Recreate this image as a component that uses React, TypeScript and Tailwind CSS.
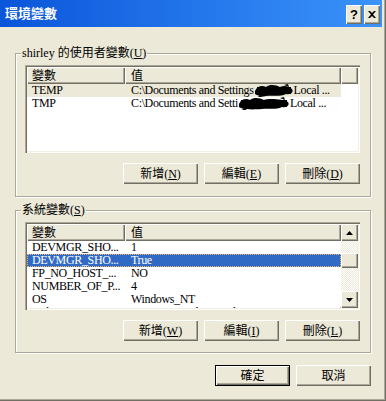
import React from "react";

const RAISED =
  "bg-[#ECE9D8] shadow-[inset_1px_1px_0_#ffffff,inset_-1px_-1px_0_#716F64,inset_-2px_-2px_0_#ACA899]";

function Blob({ w }: { w: number }) {
  return (
    <svg width={w} height={13} viewBox={`0 0 ${w} 13`} className="inline-block align-top">
      <path
        d={`M1 7 C3 2 8 1 12 3 C16 0 22 1 26 3 C30 1 ${w - 6} 2 ${w - 2} 5 C${w} 8 ${w - 3} 11 ${w - 8} 10 C${w - 14} 13 ${w - 22} 11 ${w - 28} 12 C10 13 4 12 1 10 Z`}
        fill="#000"
      />
      <rect x={3} y={3} width={w - 6} height={7} fill="#000" />
      <path d={`M${w - 10} 1 L${w - 6} 0 L${w - 5} 3 Z M6 11 L9 13 L4 13 Z`} fill="#000" />
    </svg>
  );
}

function Btn({ children, def }: { children: React.ReactNode; def?: boolean }) {
  return (
    <div
      className={
        def
          ? "w-[75px] h-[21px] border border-black bg-[#ECE9D8] shadow-[inset_1px_1px_0_#ffffff,inset_-1px_-1px_0_#716F64,inset_-2px_-2px_0_#ACA899] flex items-center justify-center text-[12px] leading-none"
          : "w-[75px] h-[21px] bg-[#ECE9D8] shadow-[inset_1px_1px_0_#ffffff,inset_-1px_-1px_0_#716F64,inset_-2px_-2px_0_#ACA899] flex items-center justify-center text-[12px] leading-none"
      }
    >
      {children}
    </div>
  );
}

type Row = { name: string; value: React.ReactNode };

function ListView({
  rows,
  sel,
  active,
  scroll,
}: {
  rows: Row[];
  sel: number;
  active: boolean;
  scroll: boolean;
}) {
  return (
    <div className="w-[335px] h-[88px] p-[2px] bg-white shadow-[inset_1px_1px_0_#ACA899,inset_2px_2px_0_#716F64,inset_-1px_-1px_0_#ffffff,inset_-2px_-2px_0_#F1EFE2] flex">
      <div className="w-[314px] flex flex-col overflow-hidden">
        <div className="h-[17px] flex shrink-0">
          <div className={`w-[98px] h-[17px] pl-[5px] flex items-center text-[12px] ${RAISED}`}>變數</div>
          <div className={`w-[216px] h-[17px] pl-[6px] flex items-center text-[12px] ${RAISED}`}>值</div>
        </div>
        {rows.map((r, i) => {
          const isSel = i === sel;
          const cls = isSel
            ? active
              ? "bg-[#316AC5] text-white outline outline-1 outline-dotted outline-[#F2B66A] -outline-offset-1"
              : "bg-[#ECE9D8] text-black"
            : "text-black";
          return (
            <div
              key={i}
              className={`h-[13px] w-[314px] flex shrink-0 text-[12px] leading-[13px] tracking-[-0.35px] whitespace-nowrap ${cls}`}
            >
              <div className="w-[98px] pl-[5px] overflow-hidden">{r.name}</div>
              <div className="w-[216px] pl-[6px] overflow-hidden">{r.value}</div>
            </div>
          );
        })}
      </div>
      {scroll ? (
        <div className="w-[17px] flex flex-col">
          <div className={`w-[17px] h-[17px] flex items-center justify-center ${RAISED}`}>
            <svg width="7" height="4" viewBox="0 0 7 4">
              <path d="M3.5 0 L7 4 L0 4 Z" fill="#000" />
            </svg>
          </div>
          <div className="flex-1 flex flex-col bg-[repeating-conic-gradient(#ECE9D8_0%_25%,#ffffff_0%_50%)] bg-[length:2px_2px]">
            <div className="h-[12px]" />
            <div className={`w-[17px] h-[15px] ${RAISED}`} />
          </div>
          <div className={`w-[17px] h-[17px] flex items-center justify-center ${RAISED}`}>
            <svg width="7" height="4" viewBox="0 0 7 4">
              <path d="M0 0 L7 0 L3.5 4 Z" fill="#000" />
            </svg>
          </div>
        </div>
      ) : (
        <div className={`w-[17px] h-[17px] ${RAISED}`} />
      )}
    </div>
  );
}

function Group({
  label,
  children,
  className,
}: {
  label: React.ReactNode;
  children: React.ReactNode;
  className: string;
}) {
  return (
    <div
      className={`relative w-[356px] border border-[#ACA899] shadow-[inset_1px_1px_0_#ffffff,1px_1px_0_#ffffff] pl-[9px] pr-[10px] ${className}`}
    >
      <div className="absolute -top-[8px] left-[5px] px-[1px] bg-[#ECE9D8] text-[12px] leading-[14px] whitespace-nowrap">
        {label}
      </div>
      {children}
    </div>
  );
}

export default function App() {
  const userRows: Row[] = [
    {
      name: "TEMP",
      value: (
        <span>
          C:\Documents and Settings
          <Blob w={40} />
          Local ...
        </span>
      ),
    },
    {
      name: "TMP",
      value: (
        <span>
          C:\Documents and Setti
          <Blob w={52} />
          Local ...
        </span>
      ),
    },
  ];
  const sysRows: Row[] = [
    { name: "DEVMGR_SHO...", value: "1" },
    { name: "DEVMGR_SHO...", value: "True" },
    { name: "FP_NO_HOST_...", value: "NO" },
    { name: "NUMBER_OF_P...", value: "4" },
    { name: "OS", value: "Windows_NT" },
    { name: "Path", value: "C:\\Program Files\\Windows Resource Kits\\Tools\\;C:\\WINDOWS" },
  ];

  return (
    <div className="w-[386px] h-[401px] bg-[#ECE9D8] overflow-hidden font-['Liberation_Serif','Noto_Sans_CJK_TC',serif] text-black shadow-[inset_-1px_-1px_0_#716F64,inset_-2px_-2px_0_#ACA899] flex flex-col">
      {/* Title bar */}
      <div className="w-[382px] h-[27px] shrink-0 bg-gradient-to-r from-[#0A55DA] to-[#3C93FA] flex items-start">
        <div className="flex-1 pl-[5px] pt-[5px] text-white font-bold text-[13px] leading-[16px] font-['Noto_Sans_CJK_TC',sans-serif]">
          環境變數
        </div>
        <div className={`mt-[5px] w-[16px] h-[19px] flex items-center justify-center ${RAISED}`}>
          <span className="font-['Liberation_Sans',sans-serif] font-bold text-[13px] leading-none">?</span>
        </div>
        <div className={`mt-[5px] ml-[2px] mr-[2px] w-[16px] h-[19px] flex items-center justify-center ${RAISED}`}>
          <svg width="8" height="7" viewBox="0 0 8 7">
            <path d="M0 0 H2 L4 2 L6 0 H8 L5 3.5 L8 7 H6 L4 5 L2 7 H0 L3 3.5 Z" fill="#000" />
          </svg>
        </div>
      </div>

      <div className="ml-[15px] mt-[26px] flex flex-col">
        <Group
          className="h-[144px] pt-[11px]"
          label={
            <span>
              shirley 的使用者變數(<span className="underline">U</span>)
            </span>
          }
        >
          <ListView rows={userRows} sel={0} active={false} scroll={false} />
          <div className="mt-[10px] flex justify-end gap-[6px]">
            <Btn>
              新增(<span className="underline">N</span>)
            </Btn>
            <Btn>
              編輯(<span className="underline">E</span>)
            </Btn>
            <Btn>
              刪除(<span className="underline">D</span>)
            </Btn>
          </div>
        </Group>

        <Group
          className="mt-[13px] h-[143px] pt-[11px]"
          label={
            <span>
              系統變數(<span className="underline">S</span>)
            </span>
          }
        >
          <ListView rows={sysRows} sel={1} active={true} scroll={true} />
          <div className="mt-[10px] flex justify-end gap-[6px]">
            <Btn>
              新增(<span className="underline">W</span>)
            </Btn>
            <Btn>
              編輯(<span className="underline">I</span>)
            </Btn>
            <Btn>
              刪除(<span className="underline">L</span>)
            </Btn>
          </div>
        </Group>

        <div className="w-[356px] mt-[12px] flex justify-end gap-[6px]">
          <Btn def>確定</Btn>
          <Btn>取消</Btn>
        </div>
      </div>
    </div>
  );
}
